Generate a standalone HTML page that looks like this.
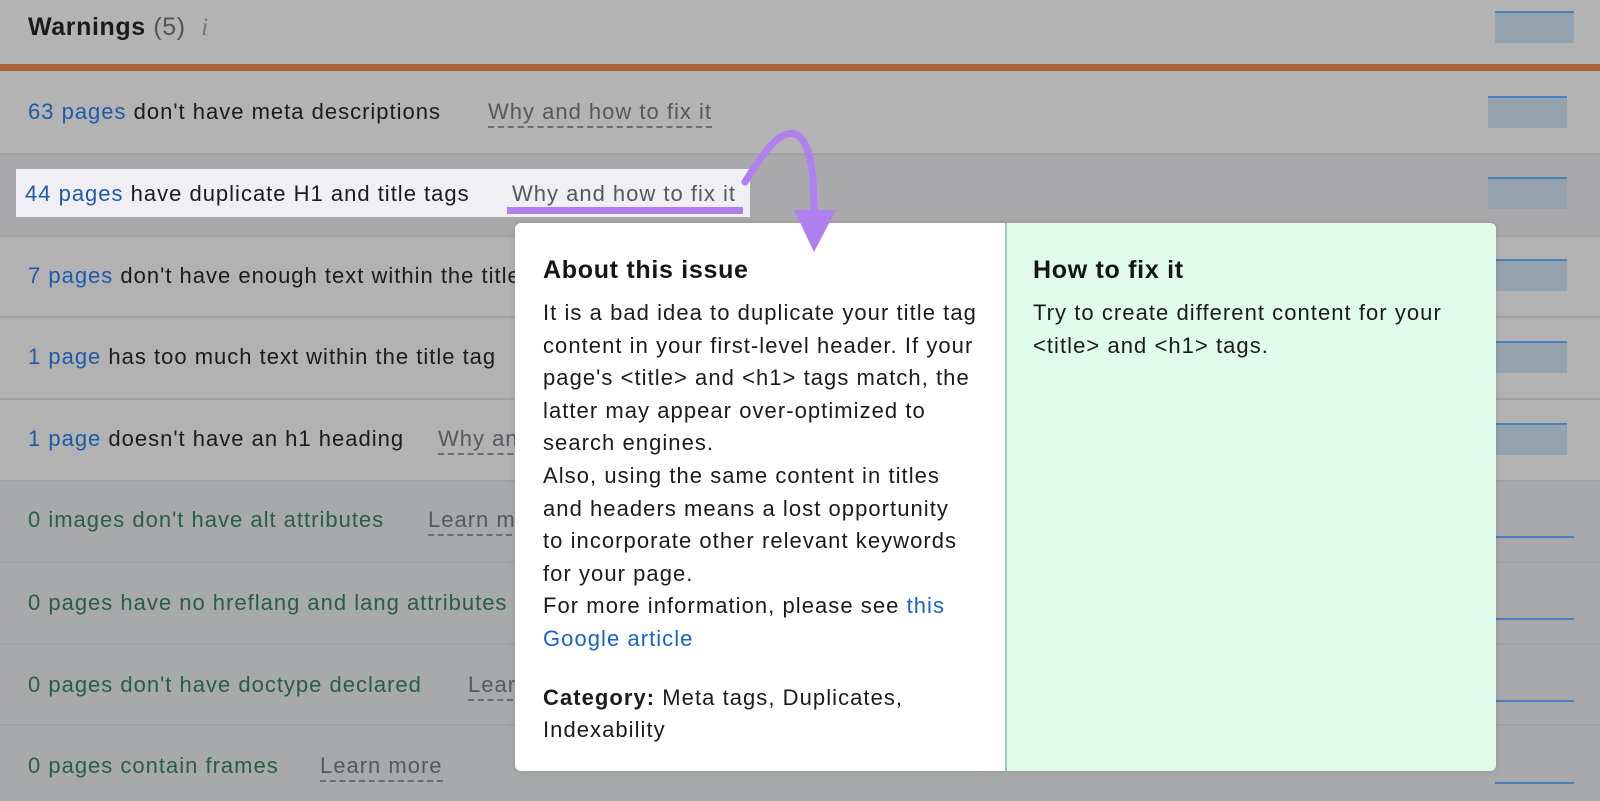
<!DOCTYPE html>
<html><head><meta charset="utf-8"><style>
*{margin:0;padding:0;box-sizing:border-box}
body{width:1600px;height:801px;overflow:hidden;position:relative;background:#b3b3b3;font-family:"Liberation Sans",Arial,sans-serif;color:#1b1b1d}
.band{position:absolute;left:0;width:1600px;border-top:2px solid #a0a1a3}
.t{position:absolute;font-size:22px;line-height:26px;white-space:nowrap;transform:translateY(-13px);letter-spacing:1px}
.b{color:#1f5aa8}.g{color:#285e43}
.l{position:absolute;font-size:22px;line-height:26px;white-space:nowrap;color:#56585e;border-bottom:2px dashed #6a6c72;transform:translateY(-13px);padding-bottom:1px;letter-spacing:1px}
.bar{position:absolute;background:#94a3ad;border-top:2px solid #4a7fc0;width:79px;height:32px}
.ln{position:absolute;height:2px;background:#4a7fc0;width:79px;left:1495px}
.pop{position:absolute;left:515px;top:223px;width:981px;height:548px;background:#fff;border-radius:6px;overflow:hidden;box-shadow:0 0 6px rgba(0,0,0,.15)}
.right{position:absolute;left:490px;top:0;width:491px;height:548px;background:#e0fbec;border-left:2px solid #8fd4b0}
.p{font-size:22px;line-height:32.6px;color:#1b1b1d;letter-spacing:1.05px;white-space:nowrap}
.h{font-size:25px;font-weight:bold;line-height:30px;color:#151518;letter-spacing:0.7px}
</style></head><body>
<div style="position:absolute;left:28px;top:12px;font-size:25px;line-height:30px;letter-spacing:0.6px"><b>Warnings</b> <span style="color:#555">(5)</span> <i style="color:#777;font-family:'Liberation Serif',serif;margin-left:8px">i</i></div>
<div class="bar" style="left:1495px;top:11px"></div>
<div style="position:absolute;left:0;top:64px;width:1600px;height:7px;background:#a9663a"></div>

<div class="band" style="top:153px;height:82px;background:#a9a9ab"></div>
<div class="band" style="top:235px;height:82px;background:#b2b2b2"></div>
<div class="band" style="top:316px;height:82px;background:#b2b2b2"></div>
<div class="band" style="top:398px;height:82px;background:#b2b2b2"></div>
<div class="band" style="top:480px;height:82px;background:#a8a9ab"></div>
<div class="band" style="top:561px;height:82px;background:#a8a9ab"></div>
<div class="band" style="top:643px;height:82px;background:#a8a9ab"></div>
<div class="band" style="top:724px;height:77px;background:#a8a9ab"></div>

<div class="t" style="left:28px;top:112px"><span class="b">63 pages</span> don't have meta descriptions</div>
<div class="l" style="left:488px;top:112px">Why and how to fix it</div>
<div class="bar" style="left:1488px;top:96px"></div>

<div style="position:absolute;left:16px;top:169px;width:734px;height:48px;background:#f0f0f4"></div>
<div class="t" style="left:25px;top:194px"><span class="b">44 pages</span> have duplicate H1 and title tags</div>
<div class="t" style="left:512px;top:194px;color:#56585e">Why and how to fix it</div>
<div style="position:absolute;left:507px;top:207px;width:236px;height:7px;background:#b07ff0"></div>
<div class="bar" style="left:1488px;top:177px"></div>

<div class="t" style="left:28px;top:276px"><span class="b">7 pages</span> don't have enough text within the title tag</div>
<div class="bar" style="left:1488px;top:259px"></div>
<div class="t" style="left:28px;top:357px"><span class="b">1 page</span> has too much text within the title tag</div>
<div class="bar" style="left:1488px;top:341px"></div>
<div class="t" style="left:28px;top:439px"><span class="b">1 page</span> doesn't have an h1 heading</div>
<div class="l" style="left:438px;top:439px">Why and how to fix it</div>
<div class="bar" style="left:1488px;top:423px"></div>
<div class="t g" style="left:28px;top:520px">0 images don't have alt attributes</div>
<div class="l" style="left:428px;top:520px">Learn more</div>
<div class="ln" style="top:536px"></div>
<div class="t g" style="left:28px;top:603px">0 pages have no hreflang and lang attributes</div>
<div class="ln" style="top:618px"></div>
<div class="t g" style="left:28px;top:685px">0 pages don't have doctype declared</div>
<div class="l" style="left:468px;top:685px">Learn more</div>
<div class="ln" style="top:700px"></div>
<div class="t g" style="left:28px;top:766px">0 pages contain frames</div>
<div class="l" style="left:320px;top:766px">Learn more</div>
<div class="ln" style="top:782px"></div>

<div class="pop">
 <div style="position:absolute;left:28px;top:32px;width:460px">
  <div class="h">About this issue</div>
  <div class="p" style="margin-top:12px">It is a bad idea to duplicate your title tag<br>content in your first-level header. If your<br>page's &lt;title&gt; and &lt;h1&gt; tags match, the<br>latter may appear over-optimized to<br>search engines.<br>Also, using the same content in titles<br>and headers means a lost opportunity<br>to incorporate other relevant keywords<br>for your page.<br>For more information, please see <span style="color:#1a62c8">this<br>Google article</span></div>
  <div class="p" style="margin-top:26px"><b>Category:</b> Meta tags, Duplicates,<br>Indexability</div>
 </div>
 <div class="right">
  <div style="position:absolute;left:26px;top:32px">
   <div class="h">How to fix it</div>
   <div class="p" style="margin-top:12px">Try to create different content for your<br>&lt;title&gt; and &lt;h1&gt; tags.</div>
  </div>
 </div>
</div>

<svg style="position:absolute;left:0;top:0" width="1600" height="801">
 <path d="M745 182 C765 150 780 130 795 134 C812 140 814 180 814 212" fill="none" stroke="#b07ff0" stroke-width="7" stroke-linecap="round"/>
 <polygon points="794,210 836,210 814,252" fill="#b07ff0"/>
</svg>
</body></html>
